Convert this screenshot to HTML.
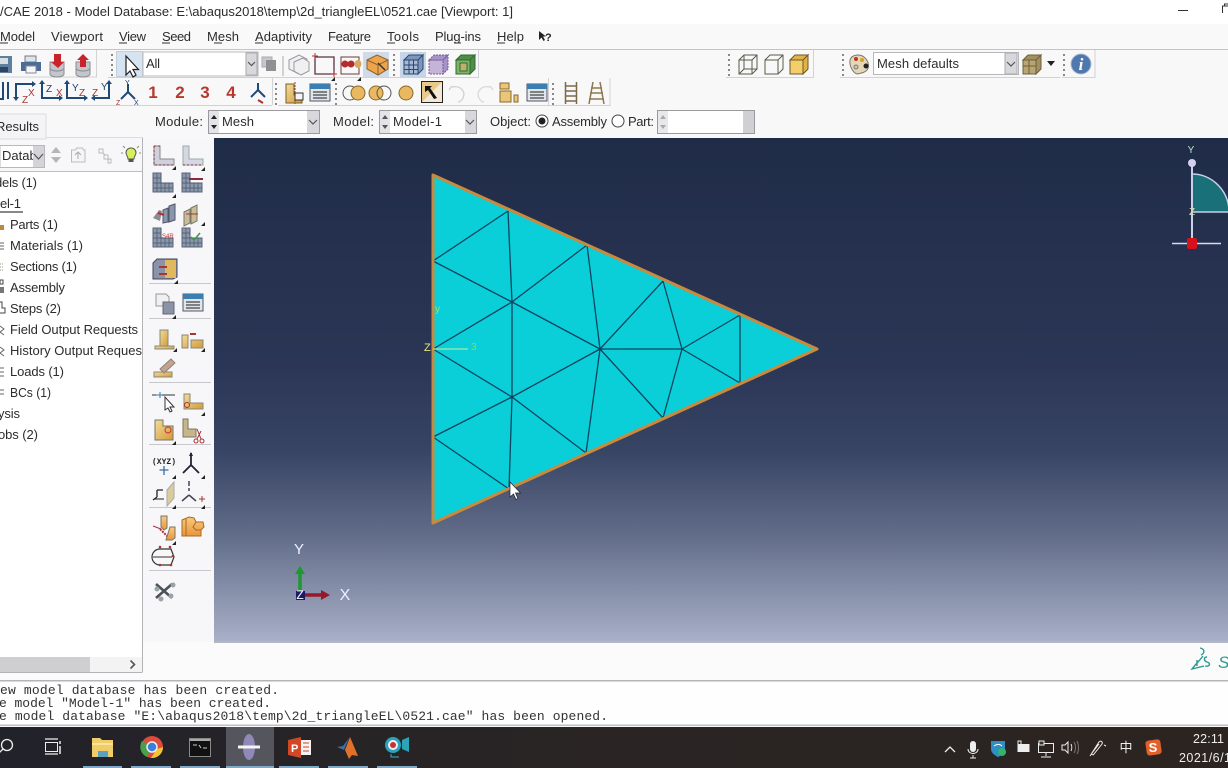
<!DOCTYPE html>
<html>
<head>
<meta charset="utf-8">
<style>
html,body{margin:0;padding:0;width:1228px;height:768px;overflow:hidden;background:#fbfbfc}
svg{display:block;filter:blur(.3px)}
text{font-family:"Liberation Sans","Noto Sans CJK SC",sans-serif;fill:#2c2c2c}
.m{font-family:"Liberation Mono",monospace;font-size:13px;fill:#333}
.t{font-size:13px}
.b{font-weight:bold;font-size:17px;fill:#b5382c}
.ax{fill:#1f3f66;font-size:10px}
.ar{fill:none;stroke:#1f4a78;stroke-width:2}
.mesh{stroke:#0b4460;stroke-width:1.300;fill:none}
</style>
</head>
<body>
<svg width="1228" height="768" viewBox="0 0 1228 768" xmlns="http://www.w3.org/2000/svg">
<defs>
<linearGradient id="vp" x1="0" y1="0" x2="0" y2="1">
<stop offset="0" stop-color="#1f2c47"/><stop offset=".45" stop-color="#2b3656"/><stop offset=".62" stop-color="#384464"/><stop offset=".78" stop-color="#5e6a86"/><stop offset="1" stop-color="#a9b0c8"/>
</linearGradient>
<linearGradient id="tb" x1="0" y1="0" x2="1" y2="0">
<stop offset="0" stop-color="#22222a"/><stop offset=".5" stop-color="#2a2524"/><stop offset="1" stop-color="#2b2420"/>
</linearGradient>
<linearGradient id="gold" x1="0" y1="0" x2="1" y2="1"><stop offset="0" stop-color="#f3dc9a"/><stop offset="1" stop-color="#d39a3c"/></linearGradient>
<linearGradient id="org" x1="0" y1="0" x2="0" y2="1"><stop offset="0" stop-color="#fbc980"/><stop offset="1" stop-color="#e8963a"/></linearGradient>
<g id="tri"><path d="M0 0l-4 4h4z" fill="#222"/></g>
<g id="hnd"><path d="M0 0v2M0 5v2M0 10v2M0 15v2M0 20v2" stroke="#888" stroke-width="2"/></g>
<g id="meshL">
<path d="M0 0h8v10h12v9H0z" fill="#8a98ad" stroke="#5a6578"/>
<path d="M0 5h8M0 10h20M0 15h20M4 0v19M8 0v19M12 10v9M16 10v9" stroke="#4c5568" stroke-width=".7" fill="none"/>
</g>
<g id="table">
<rect x="0" y="0" width="20" height="17" fill="#dfe5ea" stroke="#556"/><rect x="0" y="0" width="20" height="5" fill="#3b7eb0"/>
<path d="M3 8h14M3 11h14M3 14h14" stroke="#444" stroke-width="1.200"/>
</g>
</defs>

<!-- chrome backgrounds -->
<rect width="1228" height="24" fill="#fff"/>
<rect y="24" width="1228" height="25" fill="#f9f9fa"/>
<rect y="49" width="1228" height="1" fill="#c4c4c8"/>
<rect y="50" width="1228" height="88" fill="#f8f8f9"/>

<!-- title -->
<text x="0" y="16" class="t" textLength="513" lengthAdjust="spacingAndGlyphs">/CAE 2018 - Model Database: E:\abaqus2018\temp\2d_triangleEL\0521.cae [Viewport: 1]</text>
<path d="M1178 10.500h10" stroke="#333"/>
<path d="M1222.500 13V6h5.500M1224.500 6V4h3.500" fill="none" stroke="#333"/>

<!-- menu -->
<g class="t">
<text x="0" y="41" class="t" textLength="35">Model</text>
<text x="51" y="41" class="t" textLength="52">Viewport</text>
<text x="119" y="41" class="t" textLength="27">View</text>
<text x="162" y="41" class="t" textLength="29">Seed</text>
<text x="207" y="41" class="t" textLength="32">Mesh</text>
<text x="255" y="41" class="t" textLength="57">Adaptivity</text>
<text x="328" y="41" class="t" textLength="43">Feature</text>
<text x="387" y="41" class="t" textLength="32">Tools</text>
<text x="435" y="41" class="t" textLength="46">Plug-ins</text>
<text x="497" y="41" class="t" textLength="27">Help</text>
</g>
<path d="M0 43h8M74 43h8M119 43h8M162 43h8M214 43h8M255 43h8M354 43h7M387 43h8M454 43h7M497 43h8" stroke="#333"/>
<path d="M539 31v9l2.500-2.500 2 3.500 1.500-1-2-3.500h3z" fill="#222"/>
<text x="545" y="41" font-size="11" font-weight="bold" style="fill:#222">?</text>

<!-- toolbar group borders -->
<path d="M96.500 50v27H0M108 77.500h370.500V50M726 77.500h87.500V50M840 77.500h220.500M1062 77.500h33V50M0 105.500h272M272.500 78v27M278 105.500h272M548.500 78v27M550 105.500h60V78" stroke="#d2d2d6" fill="none"/>

<!-- row1 left -->
<path d="M-4 56h16v17H-4z" fill="#5f7f9f"/><rect x="-2" y="58" width="10" height="6" fill="#d8dde2"/><rect x="-1" y="67" width="9" height="5" fill="#2f4460"/>
<path d="M25 56h11v6H25z" fill="#dfe3ea" stroke="#778"/><path d="M21 62h20v9H21z" fill="#4e6d96"/><rect x="26" y="66" width="10" height="7" fill="#f5f5f5" stroke="#889"/>
<g>
<path d="M50 62h14v12a7 3 0 0 1-14 0z" fill="#c3c6cb" stroke="#8d8d90"/><path d="M50 68a7 3 0 0 0 14 0" fill="none" stroke="#8d8d90"/>
<rect x="54" y="54" width="7" height="9" fill="#c8242c"/><path d="M51 62h13l-6 6z" fill="#c8242c"/>
</g>
<g>
<path d="M76 62h14v12a7 3 0 0 1-14 0z" fill="#c3c6cb" stroke="#8d8d90"/><path d="M76 68a7 3 0 0 0 14 0" fill="none" stroke="#8d8d90"/>
<path d="M77 60l6-6 6 6z" fill="#c8242c"/><rect x="80" y="60" width="6" height="7" fill="#c8242c"/>
</g>
<use href="#hnd" x="112" y="54"/>
<rect x="116.500" y="51.500" width="26" height="25" fill="#d6e3f0" stroke="#c3cedb"/>
<path d="M126 56v19l4-4 3 6 3-2-3-5.500h5.500z" fill="#fff" stroke="#222" stroke-width="1.200"/>
<rect x="143" y="52" width="115" height="24" fill="#fff" stroke="#bbb"/>
<text x="146" y="68" class="t" textLength="14">All</text>
<rect x="246" y="53" width="11" height="22" fill="#d8d8dc" stroke="#aaa"/><path d="M248 62l3.500 3.500L255 62" fill="none" stroke="#555" stroke-width="1.200"/>
<rect x="262" y="57" width="10" height="10" fill="#c8c8cc" stroke="#aaa"/><rect x="266" y="60" width="10" height="11" fill="#909094"/>
<path d="M283 56v20" stroke="#aaa"/>
<g fill="#f0f0f2" stroke="#9a9a9e"><path d="M289 60l10-5 8 4v10l-8 5-10-5z"/><path d="M294 62l9-4 6 4v9l-8 4-7-4z"/></g>
<path d="M315 57h19v17h-19z" fill="none" stroke="#5a3240" stroke-width="1.300"/><path d="M312 56h6M315 53v6M331 74h6M334 71v6" stroke="#b33"/><use href="#tri" x="335" y="77"/>
<path d="M341 57h18v17h-18z" fill="none" stroke="#6a3a40"/><circle cx="345" cy="64" r="3.500" fill="#b32b2b"/><circle cx="351" cy="64" r="3.500" fill="#b32b2b"/><ellipse cx="358" cy="64" rx="3.500" ry="4" fill="#d9a860"/><use href="#tri" x="361" y="77"/>
<rect x="363" y="52" width="26" height="25" fill="#cfdbe8"/>
<path d="M367 60l10-5 11 5v9l-10 6-11-6z" fill="#eda44c" stroke="#8a6030"/><path d="M367 60l11 5 10-5M378 65v10" fill="none" stroke="#8a6030"/><path d="M378 63l7 7" stroke="#333" stroke-width="1.500"/>
<use href="#hnd" x="394" y="54"/>
<rect x="400" y="52" width="26" height="25" fill="#c6d6e8"/>
<g fill="#a6b9d6" stroke="#28486e"><path d="M404 60h14v14h-14z"/><path d="M404 60l5-5h14l-5 5zM418 60l5-5v14l-5 5z" fill="#7e96bd"/><path d="M409 60v14M413.500 60v14M404 65h14M404 69.500h14" fill="none"/></g>
<g fill="#c4b5d8" stroke="#70569a" stroke-dasharray="2 1"><path d="M429 60h14v14h-14z"/><path d="M429 60l5-5h14l-5 5zM443 60l5-5v14l-5 5z" fill="#a893c9"/></g>
<g stroke="#2f6a2f"><path d="M456 60h14v14h-14z" fill="#7db36a"/><path d="M456 60l5-5h14l-5 5zM470 60l5-5v14l-5 5z" fill="#4f8f45"/><rect x="460" y="63" width="7" height="8" fill="#c0b070"/></g>

<!-- row1 right -->
<use href="#hnd" x="729" y="54"/>
<g fill="none" stroke="#5a5a4a"><path d="M739 60h13v14h-13zM739 60l5-5h13v14l-5 5M752 60l5-5M744 55v14h13M744 69l-5 5"/></g>
<g fill="none" stroke="#5a5a4a"><path d="M765 60h13v14h-13zM765 60l5-5h13v14l-5 5M778 60l5-5"/></g>
<g stroke="#6a5a2a"><path d="M790 60h13v14h-13z" fill="#f4ce68"/><path d="M790 60l5-5h13l-5 5zM803 60l5-5v14l-5 5z" fill="#e4b144"/></g>
<use href="#hnd" x="843" y="54"/>
<path d="M850 60c2-6 10-6 14-3 5 4 6 11 2 14-4 3-7 2-8 3-4 0-9-7-8-14z" fill="#e6d6b4" stroke="#777"/><circle cx="856" cy="59" r="2" fill="#c03030"/><circle cx="862" cy="60" r="2" fill="#d8a020"/><circle cx="866" cy="66" r="2.500" fill="#222"/><circle cx="856" cy="67" r="2" fill="#c8c8c8" stroke="#777"/>
<rect x="873.500" y="52.500" width="145" height="22" fill="#fff" stroke="#b8b8bc"/>
<text x="877" y="68" class="t" textLength="82">Mesh defaults</text>
<rect x="1005" y="53" width="12" height="21" fill="#d8d8dc" stroke="#aaa"/><path d="M1007 62l4 4 4-4" fill="none" stroke="#555" stroke-width="1.200"/>
<g stroke="#6d5f3a"><path d="M1023 60h13v14h-13z" fill="#b9a674"/><path d="M1023 60l5-5h13l-5 5zM1036 60l5-5v14l-5 5z" fill="#a39060"/><path d="M1029 60v14M1023 66h13" fill="none"/></g>
<path d="M1047 61h8l-4 5z" fill="#222"/>
<use href="#hnd" x="1064" y="54"/>
<circle cx="1081" cy="64" r="10" fill="#4e78ae" stroke="#aabbd5"/><text x="1081" y="70" text-anchor="middle" font-style="italic" font-weight="bold" font-size="17" style="fill:#fff;font-family:'Liberation Serif',serif">i</text>

<!-- row2 -->
<g class="ar">
<path d="M3 82v17H-3M8 82v17"/>
<path d="M33 84H16v14"/><path d="M36 84l-4-3v6z M16 101l-3-4h6z" fill="#1f4a78" stroke="none"/>
<path d="M42 83v15h18"/><path d="M42 80l-3 4h6z M63 98l-4-3v6z" fill="#1f4a78" stroke="none"/>
<path d="M67 83v15h18"/><path d="M67 80l-3 4h6z M88 98l-4-3v6z" fill="#1f4a78" stroke="none"/>
<path d="M109 83v15H95"/><path d="M109 80l-3 4h6z M91 98l4-3v6z" fill="#1f4a78" stroke="none"/>
<path d="M128 92v-8M128 92l-7 7M128 92l7 7"/>
</g>
<text x="28" y="96" class="ax" style="fill:#a33">X</text><text x="22" y="103" class="ax" style="fill:#a33">Z</text>
<text x="46" y="92" class="ax" style="fill:#1f3f66">Z</text><text x="56" y="96" class="ax" style="fill:#a33">X</text>
<text x="72" y="91" class="ax">Y</text><text x="79" y="96" class="ax" style="fill:#a33">Z</text>
<text x="92" y="96" class="ax" style="fill:#a33">Z</text><text x="101" y="90" class="ax">Y</text>
<text x="125" y="85" font-size="7" style="fill:#1f3f66">Y</text><text x="116" y="105" font-size="7" style="fill:#a33">Z</text><text x="134" y="105" font-size="7" style="fill:#1f3f66">X</text>
<text x="153" y="98" class="b" text-anchor="middle">1</text>
<text x="180" y="98" class="b" text-anchor="middle">2</text>
<text x="205" y="98" class="b" text-anchor="middle">3</text>
<text x="231" y="98" class="b" text-anchor="middle">4</text>
<path d="M258 90v-7M258 90l-7 7M258 90l7 7" class="ar"/><path d="M258 100l5 3" stroke="#a33" stroke-width="2"/>
<use href="#hnd" x="276" y="83"/>
<path d="M286 84h8v11h8v8h-16z" fill="url(#gold)" stroke="#775f28"/><path d="M295 82v22" stroke="#a33" stroke-dasharray="2 1"/><rect x="295" y="93" width="8" height="7" fill="#f5f5f5" stroke="#333"/>
<use href="#table" x="310" y="84"/>
<use href="#hnd" x="336" y="83"/>
<circle cx="350" cy="93" r="7" fill="#f8f8f8" stroke="#555"/><circle cx="358" cy="93" r="7" fill="#e9b860" stroke="#8a6a2a"/>
<circle cx="376" cy="93" r="7" fill="#e9b860" stroke="#8a6a2a"/><circle cx="384" cy="93" r="7" fill="none" stroke="#555"/>
<circle cx="406" cy="93" r="7" fill="#e9b860" stroke="#8a6a2a"/>
<rect x="421.500" y="81.500" width="21" height="21" fill="#e8c98a" stroke="#222"/><path d="M422 102l20-20v20z" fill="#f2e8d5"/><path d="M425 86l7 0-2 2 7 10-3 1-6-9-3 2z" fill="#111"/>
<path d="M452 86l-3 4M452 87c9-2 14 5 11 11-1 2-3 4-5 4" fill="none" stroke="#d0d0d2" stroke-width="1.300"/>
<path d="M490 86l3 4M490 87c-9-2-14 5-11 11 1 2 3 4 5 4" fill="none" stroke="#d8d8da" stroke-width="1.300"/>
<rect x="500" y="83" width="9" height="6" fill="#e9c678" stroke="#8a6a2a"/><rect x="500" y="91" width="11" height="11" fill="#e9c678" stroke="#8a6a2a"/><rect x="514" y="95" width="4" height="7" fill="#e9c678" stroke="#8a6a2a"/>
<use href="#table" x="527" y="84"/>
<use href="#hnd" x="553" y="83"/>
<path d="M565.500 82v22M576.500 82v22M565 86h12M565 91h12M565 96h12M565 101h12" stroke="#7a6a48" stroke-width="1.500" fill="none"/>
<path d="M593 82l-4 22M600 82l4 22M591 88h11M590 93h13M589 99h15" stroke="#8a7a50" stroke-width="1.500" fill="none"/>

<!-- row3 -->
<text x="155" y="126" class="t" textLength="48">Module:</text>
<rect x="208.500" y="110.500" width="111" height="23" fill="#fff" stroke="#9a9a9e"/>
<rect x="209" y="111" width="10" height="22" fill="#e4e4e8"/><path d="M211 119l3-4 3 4zM211 125l3 4 3-4z" fill="#222"/>
<text x="222" y="126" class="t" textLength="32">Mesh</text>
<rect x="307" y="111" width="12" height="22" fill="#d8d8dc"/><path d="M309 120l4 4 4-4" fill="none" stroke="#555" stroke-width="1.200"/>
<text x="333" y="126" class="t" textLength="41">Model:</text>
<rect x="379.500" y="110.500" width="97" height="23" fill="#fff" stroke="#9a9a9e"/>
<rect x="380" y="111" width="10" height="22" fill="#e4e4e8"/><path d="M382 119l3-4 3 4zM382 125l3 4 3-4z" fill="#555"/>
<text x="393" y="126" class="t" textLength="49">Model-1</text>
<rect x="465" y="111" width="11" height="22" fill="#d8d8dc"/><path d="M466 120l4 4 4-4" fill="none" stroke="#555" stroke-width="1.200"/>
<text x="490" y="126" class="t" textLength="41">Object:</text>
<circle cx="542" cy="121" r="6" fill="#fff" stroke="#444"/><circle cx="542" cy="121" r="3.500" fill="#222"/>
<text x="552" y="126" class="t" textLength="55">Assembly</text>
<circle cx="618" cy="121" r="6" fill="#fff" stroke="#444"/>
<text x="628" y="126" class="t" textLength="26">Part:</text>
<rect x="657.500" y="110.500" width="97" height="23" fill="#fff" stroke="#9a9a9e"/>
<rect x="658" y="111" width="10" height="22" fill="#e8e8ec"/><path d="M660 119l3-4 3 4zM660 125l3 4 3-4z" fill="#aaa"/>
<rect x="743" y="111" width="11" height="22" fill="#d0d0d4"/>

<!-- left panel -->
<rect y="138" width="214" height="504" fill="#f7f7fa"/>
<rect y="642" width="1228" height="38" fill="#fbfbfc"/>
<rect x="-1" y="114" width="47" height="25" fill="#f4f4f6" stroke="#dcdce0"/>
<text x="-4" y="131" class="t" textLength="43">Results</text>
<rect x="46" y="137" width="97" height="1" fill="#dcdce0"/>

<rect x="0" y="145.500" width="44.500" height="22" fill="#fff" stroke="#b8b8bc"/>
<text x="2" y="160" class="t">Datab</text>
<rect x="33" y="146" width="11" height="21" fill="#d4d4d8"/><path d="M34 154l4.500 5 4.500-5" fill="none" stroke="#555" stroke-width="1.200"/>
<path d="M51 153l5-6 5 6zM51 157l5 6 5-6z" fill="#b5b5b8"/>
<path d="M71.500 150h4l1-2h6l1 2h1.500v12h-13.500z" fill="#f5f5f5" stroke="#bcbcc0"/><path d="M78 159v-6M75 155l3-3 3 3" fill="none" stroke="#aaa"/>
<path d="M99 149h4v4h-4zM104 155h4v4h-4zM108 159h3v4h-3z" fill="none" stroke="#bbb"/><path d="M103 153l2 2M108 159l1 1" stroke="#bbb"/>
<path d="M131 148c3 0 5 2 5 5 0 2-2 3-2 6h-6c0-3-2-4-2-6 0-3 2-5 5-5z" fill="#d8f05a" stroke="#555"/><rect x="128.500" y="159" width="5" height="3" fill="#555"/>
<path d="M125 148l-2-2M137 148l2-2M123 153h-2M139 153h2" stroke="#888"/>
<rect x="0" y="172" width="142" height="500" fill="#fff"/>
<path d="M0 171.500h142.500V672" fill="none" stroke="#bdbdc2"/>
<path d="M142.500 138v534M0 672.500h142.500" fill="none" stroke="#b4b4b8"/>

<g>
<text x="-5" y="187" class="t" textLength="42">dels (1)</text>
<text x="0" y="208" class="t" textLength="21">el-1</text>
<path d="M0 212h23" stroke="#111" stroke-width="1"/>
<text x="10" y="229" class="t" textLength="48">Parts (1)</text>
<text x="10" y="250" class="t" textLength="73">Materials (1)</text>
<text x="10" y="271" class="t" textLength="67">Sections (1)</text>
<text x="10" y="292" class="t" textLength="55">Assembly</text>
<text x="10" y="313" class="t" textLength="51">Steps (2)</text>
<text x="10" y="334" class="t" textLength="128">Field Output Requests</text>
<text x="10" y="355" class="t" textLength="132">History Output Reques</text>
<text x="10" y="376" class="t" textLength="54">Loads (1)</text>
<text x="10" y="397" class="t" textLength="41" lengthAdjust="spacingAndGlyphs">BCs (1)</text>
<text x="-2" y="418" class="t" textLength="22">ysis</text>
<text x="-2" y="439" class="t" textLength="40">obs (2)</text>
</g>
<!-- tree mini icons -->
<rect x="-2" y="225" width="6" height="5" fill="#b98a3a"/>
<path d="M0 243h4M0 246h4M0 249h4" stroke="#666"/>
<path d="M0 264h4M0 267h4M0 270h4" stroke="#998" stroke-dasharray="1 1"/>
<rect x="0" y="280" width="3" height="4" fill="none" stroke="#444"/><rect x="-1" y="287" width="5" height="6" fill="#777"/>
<path d="M0 302h2v6h3v5H-1" fill="none" stroke="#444"/>
<path d="M0 326l4 3-4 3 4 3" fill="none" stroke="#666"/><path d="M0 347l4 3-4 3 4 3" fill="none" stroke="#666"/>
<path d="M0 368h4M0 372h4M0 376h4" stroke="#666"/><path d="M0 390h4M0 394h4" stroke="#666"/>

<!-- scrollbar -->
<rect x="0" y="657" width="142" height="15" fill="#f3f3f4"/>
<rect x="0" y="657" width="90" height="15" fill="#cfcfd1"/>
<path d="M130.500 660.500l4 4-4 4" fill="none" stroke="#555" stroke-width="1.600"/>

<!-- tool box -->
<rect x="143" y="138" width="71" height="504" fill="#f7f7fa"/>
<path d="M149 283.500h62M149 318.500h62M149 382.500h62M149 444.500h62M149 507.500h62M149 570.500h62" stroke="#c8c8cc"/>
<!-- seed icons -->
<path d="M154 146h6v13h14v6h-20z" fill="#cfd0dc" stroke="#888"/><path d="M154 146h6M154 146v19h20" fill="none" stroke="#8a2a3a" stroke-dasharray="2 2"/><use href="#tri" x="176" y="166"/>
<path d="M183 146h6v13h14v6h-20z" fill="#d5d8e2" stroke="#9aa"/><path d="M183 165h20" stroke="#8a2a3a" stroke-dasharray="2 2"/><use href="#tri" x="205" y="167"/>
<use href="#meshL" x="153" y="173"/><use href="#tri" x="176" y="194"/>
<use href="#meshL" x="182" y="173"/><path d="M189 179h14" stroke="#8a2a3a" stroke-width="2"/>
<path d="M153 218l6-8 3 1-2 10z" fill="#8c8c90"/><path d="M163 210l5-2v14l-5 1zM169 206l6-2v16l-6 2z" fill="#8896ae" stroke="#556"/><path d="M158 213l6 2" stroke="#a33" stroke-width="2"/>
<path d="M184 212l6-3v14l-6 3zM191 208l6-3v16l-6 3z" fill="#c8bd98" stroke="#776"/><path d="M186 214h12" stroke="#a33"/><use href="#tri" x="205" y="222"/>
<use href="#meshL" x="153" y="228"/><text x="162" y="238" font-size="6" style="fill:#c33">S4R</text>
<use href="#meshL" x="182" y="228"/><path d="M191 237l3 3 6-7" fill="none" stroke="#3b9b4b" stroke-width="1.600"/>
<path d="M153 263l4-4h20v18l-4 2h-20z" fill="#8a93a8" stroke="#445"/><rect x="165" y="260" width="11" height="18" fill="#e0b860"/><path d="M159 267l8 0M159 274l8 0" stroke="#a33" stroke-width="2"/><use href="#tri" x="178" y="280"/>
<path d="M156 294h10l3 3v9h-13z" fill="#f0f0f2" stroke="#999"/><rect x="163" y="302" width="11" height="12" fill="#8a93a8" stroke="#667"/>
<use href="#tri" x="176" y="315"/>
<g transform="translate(183 294)"><use href="#table"/></g>
<path d="M155 346h19v3h-19z" fill="url(#gold)" stroke="#887"/><path d="M160 330h8v16h-8z" fill="url(#gold)" stroke="#887"/><use href="#tri" x="177" y="348"/>
<path d="M182 335h6v13h-6zM191 340h12v8h-12z" fill="url(#gold)" stroke="#887"/><path d="M190 334l6 0" stroke="#a33" stroke-width="2"/><use href="#tri" x="205" y="348"/>
<rect x="154" y="372" width="18" height="5" fill="url(#gold)" stroke="#887"/><path d="M160 369l11-10 4 4-11 10z" fill="#c8a090" stroke="#887"/>
<path d="M152 395h5M161 395h14" stroke="#333"/><path d="M156 395h6M160 392v6" stroke="#2b7bb5"/><path d="M165 397v13l3-2 2 4 2-1-2-4h4z" fill="#fff" stroke="#333"/>
<path d="M184 394h6v9h13v6h-19z" fill="url(#gold)" stroke="#887"/><circle cx="187" cy="405" r="2.500" fill="none" stroke="#a33"/><use href="#tri" x="205" y="412"/>
<path d="M155 420h8v6h10v14h-18z" fill="url(#gold)" stroke="#776"/><circle cx="168" cy="430" r="3" fill="none" stroke="#c33"/><use href="#tri" x="176" y="441"/>
<path d="M183 419h5v10h8v8h-13z" fill="#c9b58a" stroke="#776"/><path d="M197 429l4 10M201 431l-4 8" stroke="#a33"/><circle cx="196" cy="441" r="2" fill="none" stroke="#a33"/><circle cx="202" cy="441" r="2" fill="none" stroke="#a33"/>
<!-- datum -->
<text x="152" y="464" font-size="8" font-weight="bold" textLength="24" style="font-family:'Liberation Mono',monospace;fill:#222">(XYZ)</text>
<path d="M164 466v9M159.500 470h9" stroke="#3b6ea5" stroke-width="1.300"/><use href="#tri" x="176" y="475"/>
<path d="M191 465v-12M191 465l-8 8M191 465l8 8" stroke="#223" stroke-width="1.800" fill="none"/><path d="M191 452l-2 4h4z" fill="#223"/><use href="#tri" x="205" y="475"/>
<path d="M157 490v7M157 490h6M157 497l-4 3" stroke="#222" stroke-width="1.300" fill="none"/><path d="M167 490l7-8v16l-7 8z" fill="#d8cc9a" stroke="#aaa"/><path d="M154 499h10" stroke="#222"/><use href="#tri" x="176" y="505"/>
<path d="M189 481v5M189 488v3M189 495l-7 6M189 495l7 6" stroke="#445" stroke-width="1.500"/><path d="M199 499h6M202 496v6" stroke="#a33"/><use href="#tri" x="205" y="505"/>
<!-- interaction -->
<path d="M161 516h6v12l-3 2-3-3z" fill="url(#org)" stroke="#776"/><path d="M153 526l8 3" stroke="#a33"/><path d="M160 529l8 8" stroke="#a33" stroke-width="2" stroke-dasharray="2 1"/><path d="M170 527h5v11l-3 2h-6z" fill="url(#org)" stroke="#776"/><use href="#tri" x="176" y="541"/>
<path d="M182 520l7-3 5 1 2 4 7 0 1 5-3 3v6h-19z" fill="url(#org)" stroke="#a86a20"/><path d="M186 519v17M196 522l-3 5 3 3h5" fill="none" stroke="#a86a20"/>
<path d="M160 549a8 8 0 0 0 0 16h11l3-8-3-8z" fill="none" stroke="#333" stroke-width="1.200"/><path d="M153 557h19" stroke="#333"/><g fill="#a33"><circle cx="160" cy="547" r="1.300"/><circle cx="170" cy="547" r="1.300"/><circle cx="173" cy="556" r="1.300"/><circle cx="171" cy="565" r="1.300"/><circle cx="160" cy="565" r="1.300"/></g>
<!-- tools -->
<path d="M156 584l16 14M172 584l-16 14" stroke="#4c5258" stroke-width="2.600"/><circle cx="157" cy="589" r="2.500" fill="#9aa3a8"/><circle cx="173" cy="585" r="2.500" fill="#9aa3a8"/><circle cx="171" cy="596" r="2.500" fill="#9aa3a8"/><circle cx="161" cy="599" r="2.500" fill="#9aa3a8"/>

<!-- viewport -->
<rect x="214" y="138" width="1014" height="503" fill="url(#vp)"/>
<rect x="214" y="641" width="1014" height="2" fill="#b4b6c2"/>
<!-- triangle -->
<path d="M433 175L818 349 433 523z" fill="#0acfd9"/>
<g class="mesh">
<path d="M433 261L508 211M508 211L512 302L512 397L509 489M433 261L512 302M512 302L587 245M433 349L512 302M433 349L512 397M433 437L512 397M433 437L509 489M512 397L586 453M512 397L600 349M512 302L600 349M587 245L600 349M600 349L663 281M600 349H682M663 281L682 349M682 349L740 315M682 349L740 383M740 315V383M600 349L586 453M600 349L663 418M682 349L663 418"/>
</g>
<path d="M433 175L817 349 433 523z" fill="none" stroke="#c98a3e" stroke-width="3" stroke-linejoin="round"/>
<text x="424" y="351" font-size="11" style="fill:#e8e88a">Z</text>
<path d="M433 349h35" stroke="#c8ef9a"/>
<text x="471" y="350" font-size="10" style="fill:#7fe05a">3</text>
<text x="435" y="312" font-size="10" style="fill:#9ce56a">y</text>
<!-- cursor -->
<path d="M510 482v15l3.500-3 2.500 5.500 2-1-2.500-5.500h5z" fill="#fff" stroke="#223" stroke-width=".7"/>
<!-- triad bottom -->
<text x="299" y="554" text-anchor="middle" font-size="15" style="fill:#eef">Y</text>
<text x="345" y="600" text-anchor="middle" font-size="16" style="fill:#eef">X</text>
<path d="M300 590v-18" stroke="#1c9a2c" stroke-width="3.500"/><path d="M295 574l5-8 5 8z" fill="#1c9a2c"/>
<path d="M305 595h18" stroke="#98182a" stroke-width="3.500"/><path d="M321 590l9 5-9 5z" fill="#98182a"/>
<rect x="296" y="591" width="9" height="9" fill="#1a1a66"/>
<text x="300" y="599" text-anchor="middle" font-size="12" style="fill:#fff">Z</text>
<!-- triad top right -->
<text x="1191" y="153" text-anchor="middle" font-size="10" style="fill:#b5e8c0">Y</text>
<path d="M1192 174a37 38 0 0 1 37 38h-37z" fill="#1a7078"/>
<path d="M1192 174a37 38 0 0 1 37 38h-37" fill="none" stroke="#c8d0ea" stroke-width="1.500"/>
<path d="M1192 163v80" stroke="#c8d0ea" stroke-width="2"/>
<circle cx="1192" cy="163" r="4" fill="#d4d0f0"/>
<path d="M1172 243.500h49" stroke="#d8dcea" stroke-width="1.600"/>
<rect x="1187" y="238" width="10" height="11" rx="2" fill="#d8101c"/>
<text x="1192" y="215" text-anchor="middle" font-size="10" style="fill:#d8d8b0">Z</text>

<!-- status band logo -->
<path d="M1200 648c5 1 5 5 1 7M1203 656c-3 4-8 9-11 13l12-3M1197 660v6M1207 657c-4 0-3 4 0 5 4 1 3 5-2 4" fill="none" stroke="#2a9a90" stroke-width="1.400"/>
<text x="1218" y="668" font-size="17" font-style="italic" style="fill:#2a9a90">S</text>

<!-- messages -->
<rect y="680" width="1228" height="1.500" fill="#b4b4b8"/>
<rect y="681.500" width="1228" height="43" fill="#fefefe"/>
<rect y="724.500" width="1228" height="1.500" fill="#c0c0c4"/>
<rect y="726" width="1228" height="2" fill="#fbfbfc"/>
<text x="0" y="694" class="m" textLength="279">ew model database has been created.</text>
<text x="-1" y="707" class="m" textLength="272">e model "Model-1" has been created.</text>
<text x="-1" y="720" class="m" textLength="609">e model database "E:\abaqus2018\temp\2d_triangleEL\0521.cae" has been opened.</text>

<!-- taskbar -->
<rect y="727" width="1228" height="41" fill="url(#tb)"/>
<rect x="226" y="727" width="48" height="41" fill="#55555d"/>
<g fill="#7fa9c6"><rect x="83" y="766" width="39" height="2"/><rect x="131" y="766" width="40" height="2"/><rect x="180" y="766" width="40" height="2"/><rect x="226" y="766" width="48" height="2"/><rect x="279" y="766" width="40" height="2"/><rect x="328" y="766" width="40" height="2"/><rect x="377" y="766" width="40" height="2"/></g>
<circle cx="7" cy="745" r="5.500" fill="none" stroke="#eee" stroke-width="1.300"/><path d="M3 749l-5 5" stroke="#eee" stroke-width="1.300"/>
<path d="M45 739h13M45 754h13" stroke="#eee" stroke-width="1.200"/><rect x="45.500" y="742.500" width="12" height="9" fill="none" stroke="#eee"/><path d="M60 741v3M60 746v8" stroke="#eee" stroke-width="1.500"/>
<path d="M92 738h8l2 2h11v17H92z" fill="#f1cd6a"/><rect x="92" y="743" width="21" height="2" fill="#fbe49a"/><rect x="98" y="751" width="10" height="6" fill="#5aa0c0"/>
<circle cx="152" cy="747" r="11" fill="#dd4b3a"/><path d="M152 747L142 741A11 11 0 0 0 147 757z" fill="#4aa04a"/><path d="M163 747a11 11 0 0 1-12 11l6-9z" fill="#f4c431"/><circle cx="152" cy="747" r="5" fill="#3a7ee0" stroke="#eee" stroke-width="1.500"/>
<rect x="189.500" y="738.500" width="21" height="18" fill="#111" stroke="#888"/><rect x="190" y="739" width="20" height="2" fill="#aaa"/><path d="M193 745h4M199 745l2 3M203 748h4" stroke="#ccc"/>
<ellipse cx="249" cy="747" rx="6" ry="13" fill="#9089b8"/><rect x="238" y="745.500" width="22" height="3" fill="#f5f5f5"/>
<rect x="296" y="740" width="15" height="15" fill="#f2f2f2"/><path d="M288 740l13-3v21l-13-3z" fill="#d24726"/><text x="291" y="752" font-size="11" font-weight="bold" style="fill:#fff">P</text><path d="M303 743h6M303 747h6M303 751h6" stroke="#d24726"/>
<path d="M349 738l-5 12-7-3 6-1z" fill="#3b6fa5"/><path d="M350 737l8 19-6-1-3 4-4-9z" fill="#e0702a"/>
<circle cx="393" cy="745" r="8" fill="#2ba3b8"/><circle cx="393" cy="745" r="5" fill="#f0f0f0"/><circle cx="393" cy="745" r="3" fill="#c8303a"/><path d="M402 740l7-3v15l-7-3z" fill="#2ba3b8"/><path d="M391 754v3h8" stroke="#4ac" fill="none"/>
<!-- tray -->
<path d="M945 752l5-5 5 5" fill="none" stroke="#eee" stroke-width="1.300"/>
<rect x="970" y="741" width="6" height="11" rx="3" fill="#eee"/><path d="M968 749c0 6 10 6 10 0M973 755v3M970 758h6" fill="none" stroke="#eee"/>
<path d="M991 741h14v8c0 5-7 8-7 8s-7-3-7-8z" fill="#2f8ec4"/><circle cx="1002" cy="752" r="4" fill="#35b56a"/><path d="M994 746c3-2 6-2 8 0" stroke="#fff" fill="none"/>
<rect x="1017.500" y="744" width="12" height="8" fill="#eee"/><path d="M1018 744v-3h3v3" stroke="#eee" fill="none"/>
<rect x="1038.500" y="743.500" width="15" height="9" fill="none" stroke="#eee"/><path d="M1046 752v4M1041 757h10" stroke="#eee"/><rect x="1039" y="741" width="5" height="4" fill="#333" stroke="#eee"/>
<path d="M1062 745h3l3-3v11l-3-3h-3z" fill="none" stroke="#eee"/><path d="M1071 744c1 2 1 5 0 7" stroke="#eee" fill="none"/><path d="M1074 742c2 3 2 8 0 11M1077 741c2 4 2 10 0 13" stroke="#777" fill="none"/>
<path d="M1090 756l9-14c2-2 4 0 3 2l-8 10c-1 2-3 0-2-1l7-9M1104 745l2 1" fill="none" stroke="#eee"/>
<text x="1126" y="752" text-anchor="middle" font-size="13" style="fill:#eee;font-family:'Noto Sans CJK SC',sans-serif">中</text>
<rect x="1146" y="740" width="15" height="15" rx="3" fill="#e2602a" transform="rotate(-8 1153 747)"/><text x="1153" y="752" text-anchor="middle" font-size="13" font-weight="bold" style="fill:#fff">S</text>
<text x="1193" y="743" font-size="12.500" style="fill:#eee" textLength="31">22:11</text>
<text x="1179" y="762" font-size="12.500" style="fill:#eee" textLength="52">2021/6/1</text>
</svg>
</body>
</html>
